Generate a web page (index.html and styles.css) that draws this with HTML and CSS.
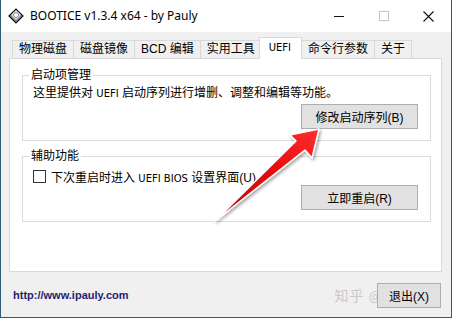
FILE: index.html
```html
<!DOCTYPE html>
<html lang="zh-CN">
<head>
    <meta charset="UTF-8">
    <title>BOOTICE</title>
    <link rel="stylesheet" href="styles.css">
</head>
<body>
    <div class="window">
        <div class="titlebar">
            <svg class="app-icon" viewBox="0 0 16 16">
                <polygon points="1,8 8,1 15,8 8,15" fill="#8c8c8c" stroke="#111" stroke-width="1.2"/>
                <polygon points="3,7 8,2 13,7 8,12" fill="#d8d8d8"/>
                <polygon points="5,7 8,4 11,7 8,10" fill="#f4f4f4" stroke="#555" stroke-width="0.6"/>
            </svg>
            <span class="title">BOOTICE v1.3.4 x64 - by Pauly</span>
            <div class="controls">
                <span class="ctl">
                    <svg width="10" height="10" viewBox="0 0 10 10"><line x1="0" y1="5.5" x2="10" y2="5.5" stroke="#111" stroke-width="1"/></svg>
                </span>
                <span class="ctl">
                    <svg width="10" height="10" viewBox="0 0 10 10"><rect x="0.5" y="0.5" width="9" height="9" fill="none" stroke="#c4c4c4" stroke-width="1"/></svg>
                </span>
                <span class="ctl">
                    <svg width="11" height="11" viewBox="0 0 11 11"><path d="M0.5 0.5 L10.5 10.5 M10.5 0.5 L0.5 10.5" stroke="#111" stroke-width="1.1"/></svg>
                </span>
            </div>
        </div>

        <div class="client">
            <div class="tabs">
                <span class="tab">物理磁盘</span>
                <span class="tab">磁盘镜像</span>
                <span class="tab">BCD 编辑</span>
                <span class="tab">实用工具</span>
                <span class="tab active">UEFI</span>
                <span class="tab">命令行参数</span>
                <span class="tab">关于</span>
            </div>

            <div class="panel">
                <fieldset class="group">
                    <legend>启动项管理</legend>
                    <p class="desc">这里提供对 <span class="latin">UEFI</span> 启动序列进行增删、调整和编辑等功能。</p>
                    <div class="actions">
                        <button class="btn">修改启动序列(B)</button>
                    </div>
                </fieldset>

                <fieldset class="group second">
                    <legend>辅助功能</legend>
                    <label class="check">
                        <span class="box"></span>
                        <span>下次重启时进入 <span class="latin">UEFI BIOS</span> 设置界面(U)</span>
                    </label>
                    <div class="actions tight">
                        <button class="btn">立即重启(R)</button>
                    </div>
                </fieldset>
            </div>

            <div class="footer">
                <a class="url">http://www.ipauly.com</a>
                <span class="watermark">知乎 @</span>
                <button class="btn exit">退出(X)</button>
            </div>
        </div>

        <svg class="arrow" width="452" height="318" viewBox="0 0 452 318">
            <defs>
                <linearGradient id="red" x1="0" y1="1" x2="1" y2="0">
                    <stop offset="0" stop-color="#b80000"/>
                    <stop offset="0.6" stop-color="#e81010"/>
                    <stop offset="1" stop-color="#ff3030"/>
                </linearGradient>
                <filter id="shadow" x="-20%" y="-20%" width="140%" height="140%">
                    <feDropShadow dx="1.5" dy="2" stdDeviation="1.5" flood-color="#000" flood-opacity="0.35"/>
                </filter>
            </defs>
            <polygon points="215,221 296,141 290,135 319,129 312,158 305,150" fill="url(#red)" stroke="#fff" stroke-width="1.5" stroke-linejoin="round" filter="url(#shadow)"/>
        </svg>
    </div>
</body>
</html>
```

FILE: styles.css
```css
* {
    margin: 0;
    padding: 0;
    box-sizing: border-box;
}
body {
    width: 452px;
    height: 318px;
    overflow: hidden;
    font-family: "Liberation Sans", "Noto Sans CJK SC", sans-serif;
    font-size: 12px;
    color: #000;
    background: #fff;
}
.window {
    position: relative;
    width: 452px;
    height: 318px;
    display: flex;
    flex-direction: column;
    border: 1px solid #2d5c74;
    border-top: 0;
    background: #f0f0f0;
}
.titlebar {
    height: 32px;
    display: flex;
    align-items: center;
    background: #fff;
}
.app-icon {
    width: 16px;
    height: 16px;
    margin-left: 7px;
}
.title {
    margin-left: 6px;
    font-family: "Noto Sans", sans-serif;
    font-size: 12px;
    line-height: 16px;
}
.controls {
    margin-left: auto;
    display: flex;
    height: 100%;
}
.ctl {
    width: 45px;
    display: flex;
    align-items: center;
    justify-content: center;
}
.client {
    flex: 1;
    display: flex;
    flex-direction: column;
    padding: 0 9px 0 8px;
}
.tabs {
    display: flex;
    align-items: flex-end;
    height: 20px;
    margin-top: 6px;
    padding-left: 3px;
    position: relative;
    z-index: 1;
}
.tab {
    height: 18px;
    line-height: 17px;
    padding: 0 6px;
    border: 1px solid #d9d9d9;
    border-bottom: 0;
    margin-right: -1px;
    background: #f0f0f0;
}
.tab.active {
    height: 22px;
    line-height: 19px;
    margin: 0 -1px -1px -2px;
    padding: 0 10px 0 9px;
    background: #fff;
    font-family: "DejaVu Sans", sans-serif;
    font-size: 10px;
    position: relative;
}
.panel {
    height: 214px;
    background: #fff;
    border: 1px solid #d9d9d9;
    padding: 8px 10px 0 12px;
}
.group {
    border: 1px solid #dcdcdc;
    padding: 0 12px 11px 10px;
}
.group legend {
    margin-left: -4px;
    padding: 0 2px;
    line-height: 16px;
}
.group.second {
    margin-top: 7px;
}
.desc {
    line-height: 20px;
}
.latin {
    font-family: "DejaVu Sans", sans-serif;
    font-size: 10px;
}
.actions {
    display: flex;
    justify-content: flex-end;
}
.actions.tight {
    margin-top: -1px;
}
.btn {
    width: 117px;
    height: 25px;
    border: 1px solid #adadad;
    background: #e1e1e1;
    font-family: "Liberation Sans", "Noto Sans CJK SC", sans-serif;
    font-size: 12px;
    color: #000;
}
.check {
    display: flex;
    align-items: center;
    height: 20px;
    margin-top: 2px;
}
.box {
    width: 13px;
    height: 13px;
    border: 1px solid #333;
    background: #fff;
    margin-right: 5px;
}
.footer {
    flex: 1;
    display: flex;
    align-items: center;
    padding-top: 1px;
}
.url {
    margin-left: 4px;
    font-family: "Liberation Sans", sans-serif;
    font-weight: bold;
    font-size: 11px;
    color: #1f1d6e;
}
.watermark {
    margin-left: auto;
    margin-right: -6px;
    font-family: "Noto Sans CJK SC", sans-serif;
    font-size: 14px;
    letter-spacing: 1px;
    color: #c8c8c8;
}
.btn.exit {
    width: 64px;
    margin-right: 1px;
}
.arrow {
    position: absolute;
    left: -1px;
    top: 0;
    pointer-events: none;
}
```
